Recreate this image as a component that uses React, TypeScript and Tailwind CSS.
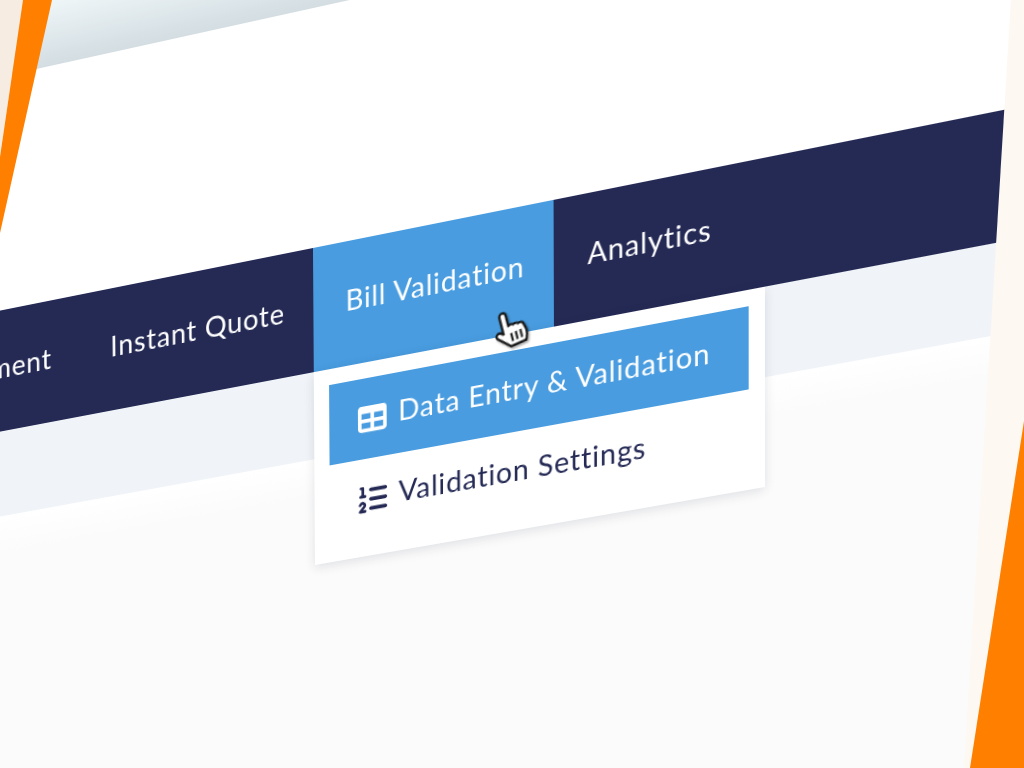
import { FaListOl, FaTable } from "react-icons/fa6";

function HandCursor() {
  return (
    <svg viewBox="0 0 20 24" className="absolute left-[186px] top-[98px] z-20 h-[46px] w-[39px] -rotate-[14deg] drop-shadow-[1px_2px_1px_rgba(0,0,0,0.35)]">
      <path
        d="M7 1.2c1 0 1.700.8 1.700 1.800v6c.8-.7 2.100-.6 2.600.2.8-.6 2.100-.4 2.600.5.9-.5 2.200-.1 2.500.9l.7 2.900c.3 1.700 0 3.500-.7 5l-.5 1.200H7.600L1.900 13.300c-.6-.7-.6-1.600 0-2.100.7-.6 1.800-.5 2.500.1l.9.9V3c0-1 .7-1.800 1.700-1.800z"
        fill="#fff"
        stroke="#141414"
        strokeWidth="1.2"
        strokeLinejoin="round"
      />
      <path d="M9.200 13v4.500M11.700 13v4.500M14.200 13v4.500" stroke="#141414" strokeWidth="1.100" fill="none" />
    </svg>
  );
}

function Dropdown() {
  return (
    <div className="absolute left-0 top-full z-10 h-[195px] w-[458px] bg-white p-4 text-[#252a55] shadow-[0_3px_10px_rgba(30,40,70,0.12)]">
      <div className="flex h-[81px] items-center gap-[12px] bg-[#489cdf] pb-[5px] pl-[30px] text-white">
        <FaTable className="mt-[5px] h-[30px] w-[30px]" />
        <span>Data Entry &amp; Validation</span>
      </div>
      <div className="flex h-[81px] items-center gap-[12px] pb-[5px] pl-[30px]">
        <FaListOl className="mt-[5px] h-[30px] w-[30px]" />
        <span>Validation Settings</span>
      </div>
    </div>
  );
}

export default function App() {
  return (
    <div className="relative h-[768px] w-[1024px] overflow-hidden bg-white font-['Lato',sans-serif] text-[29px] tracking-[0.03em]">
      {/* the tilted page */}
      <div className="w-[1700px] origin-top-left [transform:matrix3d(0.89501,-0.20299,0,-0.00007723,0.010272,0.96527,0,0.000013428,0,0,1,0,-149.02,-44.86,0,1)]">
        <div className="h-[160px] bg-linear-to-b from-[#eef5f7] from-60% to-[#d3dde2]" />
        <div className="h-[240px] bg-white" />
        <nav className="flex h-[125px] items-stretch bg-[#252a55] text-white">
          <div className="flex w-[500px] shrink-0 justify-end">
            <a className="flex items-center pb-[7px] pr-[34px]">Management</a>
            <a className="flex items-center px-[30px] pb-[7px]">Instant Quote</a>
          </div>
          <a className="relative flex w-[248px] shrink-0 items-center justify-center bg-[#489cdf] pb-[7px] pl-[4px]">
            Bill Validation
            <HandCursor />
            <Dropdown />
          </a>
          <a className="flex items-center px-[34px] pb-[7px]">Analytics</a>
        </nav>
        <div className="h-[88px] bg-[#f0f4f8]" />
        <div className="h-[40px] bg-linear-to-b from-white to-[#fbfbfb]" />
        <div className="h-[500px] bg-[#fbfbfb]" />
      </div>

      {/* frame around the page */}
      <div className="absolute inset-0 bg-[#f6ece2] [clip-path:polygon(0_0,23px_0,0_157px)]" />
      <div className="absolute inset-0 bg-[#ff7f00] [clip-path:polygon(23px_0,52px_0,0_233px,0_157px)]" />
      <div className="absolute inset-0 bg-[#fdf8f1] [clip-path:polygon(1011px_0,1024px_0,1024px_768px,964px_768px)]" />
      <div className="absolute inset-0 bg-[#ff7f00] [clip-path:polygon(1024px_421px,1024px_768px,970px_768px)]" />
    </div>
  );
}
